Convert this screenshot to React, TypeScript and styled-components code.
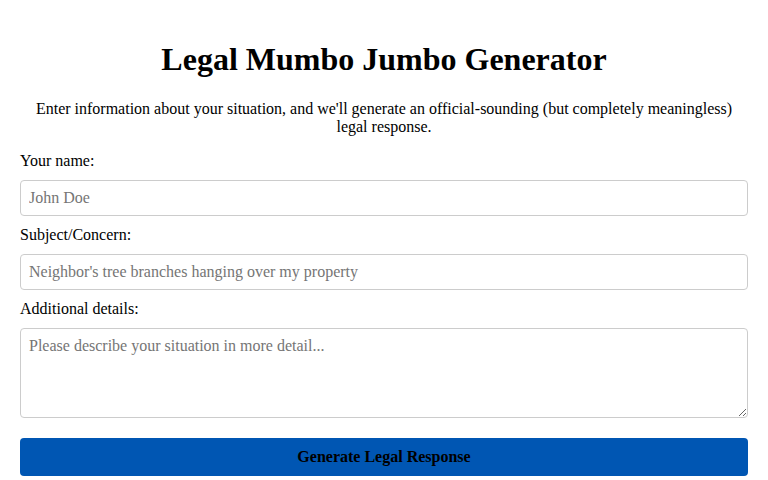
import styled, { createGlobalStyle } from "styled-components";

const GlobalStyle = createGlobalStyle`
  body {
    margin: 0;
    background: #fff;
    color: #000;
    font-family: "Liberation Serif", "Times New Roman", serif;
  }
`;

const Page = styled.div`
  padding: 20px 20px 0;
`;

const Title = styled.h1`
  margin: 21.44px 0;
  font-size: 32px;
  font-weight: bold;
  text-align: center;
`;

const Intro = styled.p`
  margin: 0 0 16px;
  font-size: 16px;
  text-align: center;
`;

const Form = styled.form`
  display: flex;
  flex-direction: column;
`;

const Field = styled.div`
  display: flex;
  flex-direction: column;
  margin-bottom: 10px;

  &:last-of-type {
    margin-bottom: 20px;
  }
`;

const Label = styled.label`
  display: block;
  margin-bottom: 10px;
  font-size: 16px;
`;

const Input = styled.input`
  box-sizing: border-box;
  width: 100%;
  height: 36px;
  padding: 8px;
  border: 1px solid #ccc;
  border-radius: 4px;
  font-family: inherit;
  font-size: 16px;

  &::placeholder {
    color: #757575;
  }
`;

const TextArea = styled.textarea`
  box-sizing: border-box;
  display: block;
  width: 100%;
  height: 90px;
  padding: 8px;
  border: 1px solid #ccc;
  border-radius: 4px;
  font-family: inherit;
  font-size: 16px;
  resize: vertical;

  &::placeholder {
    color: #757575;
  }
`;

const SubmitButton = styled.button`
  width: 100%;
  height: 38px;
  padding: 10px;
  border: none;
  border-radius: 4px;
  background: #0056b3;
  color: #000;
  font-family: inherit;
  font-size: 16px;
  font-weight: bold;
  cursor: pointer;
`;

export default function App() {
  return (
    <>
      <GlobalStyle />
      <Page>
        <Title>Legal Mumbo Jumbo Generator</Title>
        <Intro>
          Enter information about your situation, and we'll generate an
          official-sounding (but completely meaningless) legal response.
        </Intro>
        <Form onSubmit={(e) => e.preventDefault()}>
          <Field>
            <Label htmlFor="name">Your name:</Label>
            <Input id="name" type="text" placeholder="John Doe" />
          </Field>
          <Field>
            <Label htmlFor="subject">Subject/Concern:</Label>
            <Input
              id="subject"
              type="text"
              placeholder="Neighbor's tree branches hanging over my property"
            />
          </Field>
          <Field>
            <Label htmlFor="details">Additional details:</Label>
            <TextArea
              id="details"
              placeholder="Please describe your situation in more detail..."
            />
          </Field>
          <SubmitButton type="submit">Generate Legal Response</SubmitButton>
        </Form>
      </Page>
    </>
  );
}
